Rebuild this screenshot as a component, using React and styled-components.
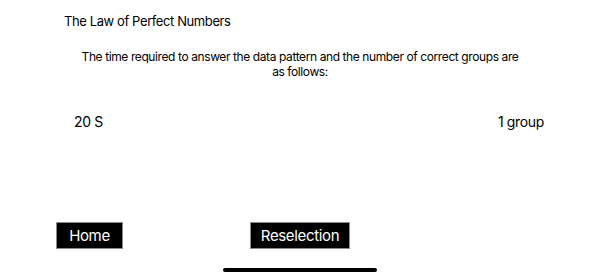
import React from "react";
import styled, { createGlobalStyle } from "styled-components";

const Global = createGlobalStyle`
  html, body { margin: 0; padding: 0; background: #fff; }
  body { font-family: Inter, "Liberation Sans", sans-serif; color: #000; }
  * { box-sizing: border-box; }
`;

const Screen = styled.div`
  position: relative;
  width: 600px;
  height: 277px;
  display: flex;
  flex-direction: column;
  background: #fff;
  overflow: hidden;
`;

const Title = styled.h1`
  margin: 0;
  padding: 13px 0 0 64px;
  font-size: 13px;
  font-weight: 400;
  line-height: 16px;
  letter-spacing: -0.4px;
`;

const Description = styled.p`
  margin: 20px auto 0;
  width: 442px;
  text-align: center;
  font-size: 12px;
  line-height: 15px;
  letter-spacing: -0.4px;
`;

const ResultRow = styled.div`
  display: flex;
  justify-content: space-between;
  align-items: baseline;
  margin-top: 34px;
  padding: 0 56px 0 74px;
`;

const ResultValue = styled.span`
  font-size: 14px;
  line-height: 17px;
  letter-spacing: -0.35px;
`;

const Actions = styled.div`
  display: grid;
  grid-template-columns: 1fr auto 1fr;
  align-items: center;
  margin-top: auto;
  margin-bottom: 28px;
  padding: 0 56px;
`;

const ActionButton = styled.button`
  justify-self: ${(p) => p.$align || "center"};
  width: ${(p) => p.$width}px;
  height: 27px;
  padding: 0;
  background: #000;
  color: #fff;
  border: 1px solid #8a8a8a;
  border-radius: 0;
  font-family: Inter, "Liberation Sans", sans-serif;
  font-size: 15px;
  line-height: 25px;
  letter-spacing: -0.35px;
  text-align: center;
  cursor: pointer;
`;

const HomeIndicator = styled.div`
  position: absolute;
  left: 223px;
  bottom: 5px;
  width: 154px;
  height: 4px;
  border-radius: 2px;
  background: #000;
`;

export default function App() {
  return (
    <>
      <Global />
      <Screen>
        <Title>The Law of Perfect Numbers</Title>
        <Description>
          The time required to answer the data pattern and the number of correct
          groups are as follows:
        </Description>
        <ResultRow>
          <ResultValue>20 S</ResultValue>
          <ResultValue>1 group</ResultValue>
        </ResultRow>
        <Actions>
          <ActionButton $align="start" $width={67}>Home</ActionButton>
          <ActionButton $width={100}>Reselection</ActionButton>
          <span />
        </Actions>
        <HomeIndicator />
      </Screen>
    </>
  );
}
